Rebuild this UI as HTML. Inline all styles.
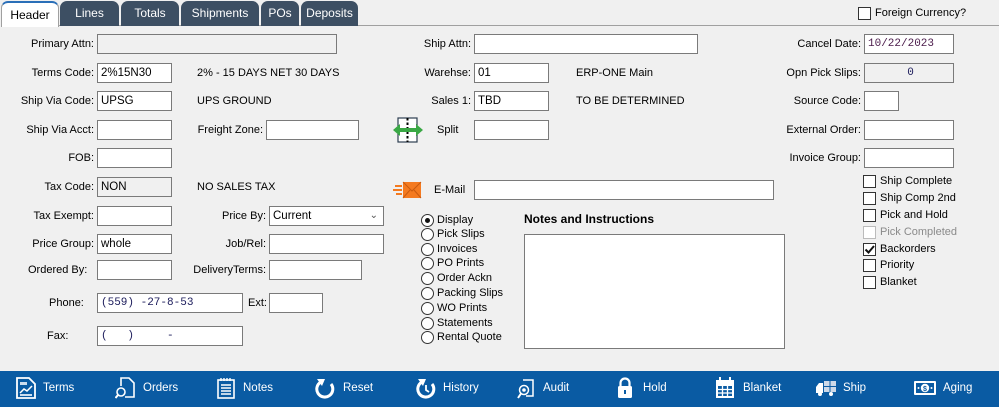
<!DOCTYPE html>
<html><head><meta charset="utf-8"><style>
*{box-sizing:border-box;margin:0;padding:0}
body{width:999px;height:407px;background:#f0f0f0;font-family:"Liberation Sans",sans-serif;font-size:11px;color:#000;position:relative;overflow:hidden}
.a{position:absolute;white-space:nowrap}
.l{position:absolute;white-space:nowrap;text-align:right;line-height:20px}
.i{position:absolute;height:20px;border:1px solid #7a7a7a;background:#fff;padding-left:3px;line-height:18px;font-size:11.5px}
.d{background:#f0f0f0}
.m{font-family:"Liberation Mono",monospace;font-size:11px;color:#1a1a5a}
.tab{position:absolute;top:1px;height:25px;background:#3d4f63;color:#fff;border-radius:7px 7px 0 0;text-align:center;line-height:25px;font-size:12px}
.r{position:absolute;left:421px;width:13px;height:13px;border:1px solid #333;border-radius:50%;background:#fff}
.rt{position:absolute;left:437px;line-height:14px}
.c{position:absolute;left:863px;width:13px;height:13px;border:1px solid #333;background:#fff}
.ct{position:absolute;left:880px;line-height:14px}
.tb{position:absolute;top:371px;left:0;width:999px;height:36px;background:#0a5ba3}
.tt{position:absolute;top:381px;color:#fff;line-height:14px;font-size:11.5px}
svg.ic{position:absolute;top:377px}
</style></head><body>
<div class="a" style="left:59px;top:25px;width:940px;height:1px;background:#a0a0a0"></div>
<div class="tab" style="left:1px;width:58px;background:#fff;color:#000;border:1px solid #a0a0a0;border-bottom:none;border-top:2px solid #2a6fb8;height:26px">Header</div>
<div class="tab" style="left:60px;width:59px">Lines</div>
<div class="tab" style="left:121px;width:58px">Totals</div>
<div class="tab" style="left:181px;width:78px">Shipments</div>
<div class="tab" style="left:261px;width:38px">POs</div>
<div class="tab" style="left:301px;width:57px">Deposits</div>
<div class="a" style="left:858px;top:7px;width:13px;height:13px;border:1px solid #333;background:#fff"></div>
<div class="a" style="left:875px;top:7px">Foreign Currency?</div>

<div class="l" style="right:905px;top:34px">Primary Attn:</div><div class="i d" style="left:97px;top:34px;width:240px"></div>
<div class="l" style="right:905px;top:63px">Terms Code:</div><div class="i" style="left:97px;top:63px;width:75px">2%15N30</div>
<div class="a" style="left:197px;top:67px">2% - 15 DAYS NET 30 DAYS</div>
<div class="l" style="right:905px;top:91px">Ship Via Code:</div><div class="i" style="left:97px;top:91px;width:75px">UPSG</div>
<div class="a" style="left:197px;top:95px">UPS GROUND</div>
<div class="l" style="right:905px;top:120px">Ship Via Acct:</div><div class="i" style="left:97px;top:120px;width:75px"></div>
<div class="l" style="right:736px;top:120px">Freight Zone:</div><div class="i" style="left:266px;top:120px;width:93px"></div>
<div class="l" style="right:905px;top:148px">FOB:</div><div class="i" style="left:97px;top:148px;width:75px"></div>
<div class="l" style="right:905px;top:177px">Tax Code:</div><div class="i d" style="left:97px;top:177px;width:75px">NON</div>
<div class="a" style="left:197px;top:181px">NO SALES TAX</div>
<div class="l" style="right:905px;top:206px">Tax Exempt:</div><div class="i" style="left:97px;top:206px;width:75px"></div>
<div class="l" style="right:733px;top:206px">Price By:</div><div class="i" style="left:269px;top:206px;width:115px">Current<span style="position:absolute;right:5px;top:0;color:#555;font-size:10px">&#8964;</span></div>
<div class="l" style="right:905px;top:234px">Price Group:</div><div class="i" style="left:97px;top:234px;width:75px">whole</div>
<div class="l" style="right:733px;top:234px">Job/Rel:</div><div class="i" style="left:269px;top:234px;width:115px"></div>
<div class="a" style="left:28px;top:264px">Ordered By:</div><div class="i" style="left:97px;top:260px;width:75px"></div>
<div class="l" style="right:733px;top:260px">DeliveryTerms:</div><div class="i" style="left:269px;top:260px;width:93px"></div>
<div class="a" style="left:49px;top:297px">Phone:</div><div class="i m" style="left:97px;top:293px;width:146px">(559) -27-8-53</div>
<div class="a" style="left:248px;top:297px">Ext:</div><div class="i" style="left:269px;top:293px;width:54px"></div>
<div class="a" style="left:47px;top:330px">Fax:</div><div class="i m" style="left:97px;top:326px;width:146px">(&nbsp;&nbsp;&nbsp;)&nbsp;&nbsp;&nbsp;&nbsp;&nbsp;-</div>

<div class="l" style="right:528px;top:34px">Ship Attn:</div><div class="i" style="left:474px;top:34px;width:224px"></div>
<div class="l" style="right:528px;top:63px">Warehse:</div><div class="i" style="left:474px;top:63px;width:75px">01</div>
<div class="a" style="left:576px;top:67px">ERP-ONE Main</div>
<div class="l" style="right:528px;top:91px">Sales 1:</div><div class="i" style="left:474px;top:91px;width:75px">TBD</div>
<div class="a" style="left:576px;top:95px">TO BE DETERMINED</div>
<svg class="a" style="left:392px;top:116px" width="32" height="30" viewBox="0 0 32 30"><rect x="6" y="2" width="19" height="24" fill="#fff" stroke="#2d3e50" stroke-width="1.2"/><line x1="15.5" y1="2" x2="15.5" y2="26" stroke="#000" stroke-width="2" stroke-dasharray="2.5 2"/><path d="M1 14 L8 8 V12 H24 V8 L31 14 L24 20 V16 H8 V20 Z" fill="#3aa845"/></svg>
<div class="a" style="left:437px;top:124px">Split</div><div class="i" style="left:474px;top:120px;width:75px"></div>
<svg class="a" style="left:393px;top:180px" width="30" height="20" viewBox="0 0 30 20"><rect x="10" y="2" width="18" height="16" fill="#f47a20"/><path d="M10 2 L19 11 L28 2 M10 18 L17 10 M28 18 L21 10" stroke="#c95a10" fill="none"/><rect x="2" y="5" width="7" height="2" fill="#f47a20"/><rect x="0" y="9" width="9" height="2" fill="#f47a20"/><rect x="3" y="13" width="6" height="2" fill="#f47a20"/></svg>
<div class="a" style="left:434px;top:184px">E-Mail</div><div class="i" style="left:474px;top:180px;width:300px"></div>

<div class="r" style="top:214px"><div style="position:absolute;left:3px;top:3px;width:5px;height:5px;border-radius:50%;background:#111"></div></div><div class="rt" style="top:213px">Display</div>
<div class="r" style="top:228px"></div><div class="rt" style="top:227px">Pick Slips</div>
<div class="r" style="top:243px"></div><div class="rt" style="top:242px">Invoices</div>
<div class="r" style="top:257px"></div><div class="rt" style="top:256px">PO Prints</div>
<div class="r" style="top:272px"></div><div class="rt" style="top:271px">Order Ackn</div>
<div class="r" style="top:287px"></div><div class="rt" style="top:286px">Packing Slips</div>
<div class="r" style="top:302px"></div><div class="rt" style="top:301px">WO Prints</div>
<div class="r" style="top:317px"></div><div class="rt" style="top:316px">Statements</div>
<div class="r" style="top:331px"></div><div class="rt" style="top:330px">Rental Quote</div>
<div class="a" style="left:524px;top:212px;font-weight:bold;font-size:12px">Notes and Instructions</div>
<div class="i" style="left:524px;top:234px;width:261px;height:115px"></div>

<div class="l" style="right:138px;top:34px">Cancel Date:</div><div class="i m" style="left:864px;top:34px;width:90px;color:#4a1a4a">10/22/2023</div>
<div class="l" style="right:138px;top:63px">Opn Pick Slips:</div><div class="i d m" style="left:864px;top:63px;width:90px;text-align:center">0</div>
<div class="l" style="right:138px;top:91px">Source Code:</div><div class="i" style="left:864px;top:91px;width:35px"></div>
<div class="l" style="right:138px;top:120px">External Order:</div><div class="i" style="left:864px;top:120px;width:90px"></div>
<div class="l" style="right:138px;top:148px">Invoice Group:</div><div class="i" style="left:864px;top:148px;width:90px"></div>
<div class="c" style="top:175px"></div><div class="ct" style="top:174px">Ship Complete</div>
<div class="c" style="top:192px"></div><div class="ct" style="top:191px">Ship Comp 2nd</div>
<div class="c" style="top:209px"></div><div class="ct" style="top:208px">Pick and Hold</div>
<div class="c" style="top:226px;border-color:#bbb"></div><div class="ct" style="top:225px;color:#8a8a8a">Pick Completed</div>
<div class="c" style="top:243px"><svg width="11" height="11" style="position:absolute;left:0;top:0"><path d="M1.5 5.5 L4.5 8.5 L10 2" stroke="#111" stroke-width="2" fill="none"/></svg></div><div class="ct" style="top:242px">Backorders</div>
<div class="c" style="top:259px"></div><div class="ct" style="top:258px">Priority</div>
<div class="c" style="top:276px"></div><div class="ct" style="top:275px">Blanket</div>

<div class="tb"></div>
<svg class="ic" style="left:16px" width="20" height="22" viewBox="0 0 20 22"><path d="M1 1 H13 L19 7 V21 H1 Z" fill="none" stroke="#fff" stroke-width="1.8"/><rect x="4" y="5" width="7" height="3" fill="#cde"/><path d="M4 16 L8 12 L11 14 L16 9" stroke="#fff" stroke-width="1.5" fill="none"/><rect x="4" y="17" width="12" height="2" fill="#cde"/></svg>
<div class="tt" style="left:43px">Terms</div>
<svg class="ic" style="left:115px" width="20" height="22" viewBox="0 0 20 22"><path d="M6 9 V1 H14 L19 6 V20 H10" fill="none" stroke="#fff" stroke-width="1.6"/><circle cx="6" cy="15" r="4" fill="none" stroke="#fff" stroke-width="1.6"/><path d="M3 18 L0.5 21" stroke="#fff" stroke-width="2"/></svg>
<div class="tt" style="left:143px">Orders</div>
<svg class="ic" style="left:217px" width="18" height="22" viewBox="0 0 18 22"><rect x="1" y="3" width="16" height="18" fill="none" stroke="#fff" stroke-width="1.6"/><path d="M4 1 V4 M7 1 V4 M10 1 V4 M13 1 V4" stroke="#fff" stroke-width="1.4"/><path d="M4 8 H14 M4 11 H14 M4 14 H14 M4 17 H14" stroke="#fff" stroke-width="1.5"/></svg>
<div class="tt" style="left:243px">Notes</div>
<svg class="ic" style="left:315px" width="20" height="22" viewBox="0 0 20 22"><path d="M6 5 A8 8 0 1 0 16 7" fill="none" stroke="#fff" stroke-width="3"/><path d="M2 2 L10 2 L7 9 Z" fill="#fff"/></svg>
<div class="tt" style="left:343px">Reset</div>
<svg class="ic" style="left:416px" width="20" height="22" viewBox="0 0 20 22"><path d="M6 5 A8 8 0 1 0 16 7" fill="none" stroke="#fff" stroke-width="3"/><path d="M2 2 L10 2 L7 9 Z" fill="#fff"/><path d="M10 8 V13 L13 15" stroke="#fff" stroke-width="1.8" fill="none"/></svg>
<div class="tt" style="left:443px">History</div>
<svg class="ic" style="left:517px" width="18" height="22" viewBox="0 0 18 22"><path d="M6 3 H16 V19 H9" fill="none" stroke="#fff" stroke-width="1.5"/><circle cx="7" cy="13" r="4.5" fill="none" stroke="#fff" stroke-width="1.5"/><circle cx="7" cy="13" r="1.8" fill="#fff"/><path d="M4 16.5 L1 21" stroke="#fff" stroke-width="2"/></svg>
<div class="tt" style="left:543px">Audit</div>
<svg class="ic" style="left:617px" width="16" height="22" viewBox="0 0 16 22"><path d="M3.5 10 V6 A4.5 4.5 0 0 1 12.5 6 V10" fill="none" stroke="#fff" stroke-width="2.2"/><rect x="1" y="9" width="14" height="12" rx="1.5" fill="#fff"/><rect x="7" y="13" width="2" height="4" fill="#0a5ba3"/></svg>
<div class="tt" style="left:643px">Hold</div>
<svg class="ic" style="left:715px" width="20" height="22" viewBox="0 0 20 22"><rect x="1" y="3" width="18" height="18" fill="#fff"/><path d="M5 0 V4 M15 0 V4" stroke="#fff" stroke-width="2"/><rect x="3" y="9" width="14" height="10" fill="#0a5ba3"/><path d="M3 12.5 H17 M3 16 H17 M7.5 9 V19 M12.5 9 V19" stroke="#fff" stroke-width="1.3"/></svg>
<div class="tt" style="left:743px">Blanket</div>
<svg class="ic" style="left:815px" width="22" height="22" viewBox="0 0 22 22"><path d="M1 16 V10 L4 6 H8 V16 Z" fill="#fff"/><rect x="9" y="4" width="12" height="11" fill="#cdd9e8"/><path d="M15 4 V15 M9 9.5 H21" stroke="#0a5ba3"/><circle cx="5" cy="17" r="2" fill="#fff"/><circle cx="16" cy="17" r="2" fill="#fff"/></svg>
<div class="tt" style="left:843px">Ship</div>
<svg class="ic" style="left:913px" width="24" height="22" viewBox="0 0 24 22"><rect x="1" y="4" width="22" height="14" rx="1" fill="#fff"/><rect x="3" y="6" width="18" height="10" fill="#0a5ba3"/><circle cx="12" cy="11" r="4.2" fill="#fff"/><text x="12" y="14" font-size="7" font-weight="bold" text-anchor="middle" fill="#0a5ba3" font-family="Liberation Sans">$</text><circle cx="5.5" cy="11" r="1" fill="#fff"/><circle cx="18.5" cy="11" r="1" fill="#fff"/></svg>
<div class="tt" style="left:943px">Aging</div>
</body></html>
